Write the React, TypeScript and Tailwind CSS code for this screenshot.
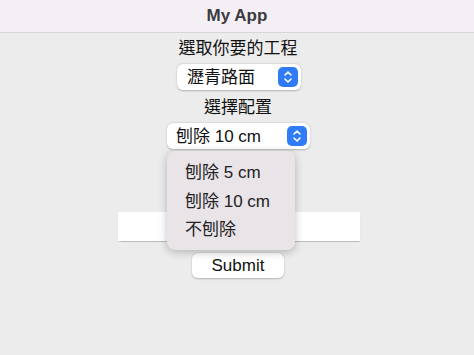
import React from "react";

const Stepper = () => (
  <span className="flex h-[20px] w-[20px] items-center justify-center rounded-[5px] bg-[#2f7cf6]">
    <svg width="10" height="14" viewBox="0 0 10 14" fill="none">
      <path d="M2 5 L5 2 L8 5" stroke="white" strokeWidth="1.6" strokeLinecap="round" strokeLinejoin="round" />
      <path d="M2 9 L5 12 L8 9" stroke="white" strokeWidth="1.6" strokeLinecap="round" strokeLinejoin="round" />
    </svg>
  </span>
);

const Select = ({ value, width, pad }: { value: string; width: string; pad: string }) => (
  <div
    className={`flex h-[26px] ${width} ${pad} items-center justify-between rounded-[6px] bg-white pr-[3px] shadow-[0_0.5px_2px_rgba(0,0,0,0.25)]`}
  >
    <span className="text-[17px] leading-none text-[#111]">{value}</span>
    <Stepper />
  </div>
);

export default function App() {
  const options = ["刨除 5 cm", "刨除 10 cm", "不刨除"];
  return (
    <div
      className="flex h-[355px] w-[474px] flex-col bg-[#ececec] text-[#111]"
      style={{ fontFamily: '"Liberation Sans", "Noto Sans CJK TC", sans-serif' }}
    >
      {/* Barre de titre */}
      <div className="flex h-[33px] items-center justify-center border-b border-[#d6d6d6] bg-[#f3eff5]">
        <span className="text-[17px] font-bold text-[#3d3b3f]">My App</span>
      </div>

      {/* Contenu */}
      <div className="flex flex-col items-center">
        <p className="mt-[4px] ml-[2px] text-[17px] leading-[24px]">選取你要的工程</p>
        <div className="mt-[3px] ml-[4px]">
          <Select value="瀝青路面" width="w-[124px]" pad="pl-[10px]" />
        </div>
        <p className="mt-[6px] ml-[2px] text-[17px] leading-[24px]">選擇配置</p>
        <div className="relative mt-[3px] ml-[3px]">
          <Select value="刨除 10 cm" width="w-[143px]" pad="pl-[9px]" />
          {/* Menu déroulant */}
          <div className="absolute left-0 top-full z-10 mt-[2px] flex w-[128px] flex-col rounded-[8px] bg-[#e9e4e8] pt-[8px] pb-[5px] pl-[18px] shadow-[0_2px_8px_rgba(0,0,0,0.25)]">
            {options.map((o) => (
              <span key={o} className="text-[17px] leading-[28.5px] text-[#222]">
                {o}
              </span>
            ))}
          </div>
        </div>
        <div className="mt-[63px] ml-[4px] h-[29px] w-[242px] bg-white shadow-[0_0.5px_1px_rgba(0,0,0,0.2)]" />
        <button className="mt-[12px] ml-[2px] h-[25px] w-[92px] rounded-[6px] bg-white text-[17px] leading-none shadow-[0_0.5px_2px_rgba(0,0,0,0.25)]">
          Submit
        </button>
      </div>
    </div>
  );
}
